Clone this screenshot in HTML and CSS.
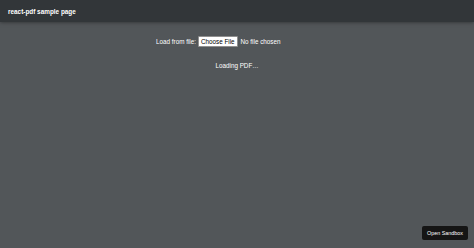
FILE: index.html
```html
<!doctype html>
<html lang="en">
  <head>
    <meta charset="UTF-8" />
    <title>react-pdf sample page</title>
    <link rel="stylesheet" href="styles.css">
  </head>
  <body>
    <header class="header">
      <h1>react-pdf sample page</h1>
    </header>
    <main class="main">
      <div class="file-row">
        <label for="file">Load from file:</label>
        <input id="file" type="file" class="file-input">
      </div>
      <div class="loading">Loading PDF…</div>
    </main>
    <button class="sandbox">Open Sandbox</button>
  </body>
</html>
```

FILE: styles.css
```css
html, body {
  margin: 0;
  height: 100%;
}
body {
  font-family: "Liberation Sans", Arial, sans-serif;
  font-size: 6.3px;
  background: #525659;
  color: #fff;
}
.header {
  background: #323639;
  height: 22px;
  padding: 0 8px;
  display: flex;
  align-items: center;
  box-shadow: 0 0 4px rgba(0, 0, 0, 0.5);
}
.header h1 {
  margin: 0;
  font-size: 6.4px;
  font-weight: bold;
}
.main {
  display: flex;
  flex-direction: column;
  align-items: center;
  padding-top: 14px;
}
.file-row {
  display: flex;
  align-items: center;
  gap: 2px;
}
.file-input {
  font-family: "Liberation Sans", Arial, sans-serif;
  font-size: 6.3px;
  color: #fff;
  width: 120px;
}
.file-input::file-selector-button {
  background: #fff;
  color: #000;
  border: 0.5px solid #8f8f8f;
  border-radius: 1px;
  padding: 1px 2px;
  margin-right: 3px;
  font-family: inherit;
  font-size: inherit;
}
.loading {
  margin-top: 15px;
}
.sandbox {
  position: fixed;
  right: 6px;
  bottom: 8px;
  background: #151515;
  color: #fff;
  border: none;
  border-radius: 2px;
  font-family: "Liberation Sans", Arial, sans-serif;
  font-size: 5.4px;
  padding: 4px 5px;
}
```
